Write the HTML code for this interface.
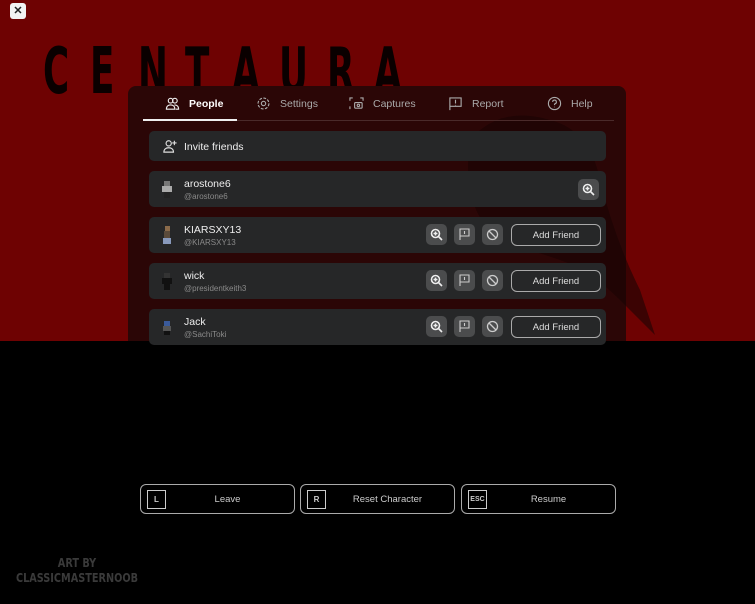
<!DOCTYPE html>
<html><head><meta charset="utf-8"><style>
*{margin:0;padding:0;box-sizing:border-box}
body{width:755px;height:604px;background:#000;position:relative;overflow:hidden;font-family:"Liberation Sans",sans-serif;color:#e8e8e8}
.red{position:absolute;left:0;top:0;width:755px;height:341px;background:#6e0202}
.close{position:absolute;left:10px;top:3px;width:16px;height:16px;background:#f2f2f2;border-radius:3px;color:#222;font-size:11px;line-height:16px;text-align:center;font-weight:bold}
.title{position:absolute;left:43px;top:42px;height:60px}
.title span{position:absolute;top:0;width:40px;font-size:64px;line-height:60px;color:#0a0000;font-weight:bold;font-family:"DejaVu Sans Condensed","Liberation Sans",sans-serif;transform:scaleX(.62);transform-origin:left}
.panel{position:absolute;left:128px;top:86px;width:498px;height:255px;background:#2b0606;border-radius:8px 8px 0 0}
.crow{position:absolute;left:440px;top:100px;width:220px;height:240px;opacity:.6}
.tab{position:absolute;top:96px;font-size:10.5px;color:#aaa;display:flex;align-items:center;gap:9px}
.tab svg{width:15px;height:15px}
.line{position:absolute;left:143px;top:120px;width:471px;height:1px;background:#4a2a2a}
.sel{position:absolute;left:143px;top:119px;width:94px;height:2px;background:#eee}
.row{position:absolute;left:149px;width:457px;height:36px;background:#262728;border-radius:5px}
.av{position:absolute;left:10px;top:8px;width:16px;height:20px}
.nm{position:absolute;left:35px;top:7px;font-size:10.5px;color:#eee}
.un{position:absolute;left:35px;top:21px;font-size:8px;color:#8a8a8a}
.ib{position:absolute;top:7px;width:21px;height:21px;background:#4b4c4d;border-radius:5px}
.ib svg{width:21px;height:21px}
.af{position:absolute;left:362px;top:7px;width:90px;height:22px;border:1px solid #aaa;border-radius:6px;font-size:9.5px;text-align:center;line-height:22px;color:#ddd}
.bb{position:absolute;top:484px;width:155px;height:30px;border:1px solid #aaa;border-radius:6px;font-size:9.5px;color:#ccc}
.bb .k{position:absolute;left:6px;top:5px;width:19px;height:19px;border:1px solid #ccc;font-size:8px;text-align:center;line-height:17px;font-weight:bold}
.bb .t{position:absolute;left:0;right:0;top:9px;text-align:center;padding-left:20px}
.art{position:absolute;left:2px;top:556px;width:150px;text-align:center;font-size:12px;font-weight:bold;color:#3a3a3a;line-height:15px;font-family:"DejaVu Sans Condensed",sans-serif}
.art div{transform:scaleX(.9);white-space:nowrap}
</style></head><body>
<div class="red"></div>
<div class="close">✕</div>
<div class="title"><span style="left:0">C</span><span style="left:47px">E</span><span style="left:95px">N</span><span style="left:142px">T</span><span style="left:189px">A</span><span style="left:236px">U</span><span style="left:284px">R</span><span style="left:331px">A</span></div>
<div class="panel"></div>
<svg class="crow" viewBox="0 0 220 240"><path d="M30 40 Q60 5 110 20 Q150 30 160 80 Q175 140 200 190 L215 235 L180 200 Q150 170 120 160 L60 140 Q20 110 30 40Z" fill="#1a0404"/></svg>
<div class="tab" style="left:165px;color:#fff;font-weight:bold"><svg viewBox="0 0 16 16" fill="none" stroke="#eee" stroke-width="1.2"><circle cx="6" cy="5" r="2.5"/><circle cx="10.5" cy="5" r="2.5"/><path d="M1.5 14c0-3 2-4.5 4.5-4.5S10.5 11 10.5 14zM10 9.5c2.5 0 4.5 1.5 4.5 4.5h-3"/></svg>People</div>
<div class="tab" style="left:256px"><svg viewBox="0 0 16 16" fill="none" stroke="#aaa" stroke-width="1.2"><circle cx="8" cy="8" r="2.3"/><circle cx="8" cy="8" r="5.8" stroke-dasharray="3 1.5"/></svg>Settings</div>
<div class="tab" style="left:349px"><svg viewBox="0 0 16 16" fill="none" stroke="#aaa" stroke-width="1.2"><path d="M1 5V2h3M1 11v3M12 2h3v3"/><rect x="6" y="7" width="8" height="6" rx="1"/><circle cx="10" cy="10" r="1.3"/></svg>Captures</div>
<div class="tab" style="left:448px"><svg viewBox="0 0 16 16" fill="none" stroke="#aaa" stroke-width="1.2"><path d="M2 15V2h12v9H2"/><path d="M8 4v4M8 9.5v.5"/></svg>Report</div>
<div class="tab" style="left:547px"><svg viewBox="0 0 16 16" fill="none" stroke="#aaa" stroke-width="1.2"><circle cx="8" cy="8" r="6.5"/><path d="M6 6.3a2 2 0 1 1 2.5 2c-.4.2-.5.5-.5 1v.4M8 11.5v.5"/></svg>Help</div>
<div class="line"></div><div class="sel"></div>

<div class="row" style="top:131px;height:30px"><svg style="position:absolute;left:14px;top:8px" width="14" height="14" viewBox="0 0 16 16" fill="none" stroke="#ddd" stroke-width="1.3"><circle cx="6.5" cy="5" r="3"/><path d="M1 15c0-3.5 2.5-5 5.5-5s5.5 1.5 5.5 5zM13 2v5M10.5 4.5h5"/></svg><div class="nm" style="top:10px">Invite friends</div></div>

<div class="row" style="top:171px"><svg class="av" viewBox="0 0 16 20"><rect x="5" y="2" width="6" height="5" fill="#777"/><rect x="3" y="7" width="10" height="6" fill="#aaa"/><rect x="5" y="13" width="6" height="6" fill="#222"/></svg><div class="nm">arostone6</div><div class="un">@arostone6</div>
<div class="ib" style="left:429px;top:8px"><svg viewBox="0 0 21 21" fill="none" stroke="#eee" stroke-width="1.6"><circle cx="9.5" cy="9.5" r="4"/><path d="M12.5 12.5l3.5 3.5M9.5 7.5v4M7.5 9.5h4"/></svg></div></div>

<div class="row" style="top:217px"><svg class="av" viewBox="0 0 16 20"><rect x="6" y="1" width="5" height="5" fill="#8a6a4a"/><rect x="5" y="6" width="6" height="7" fill="#5a4a3a"/><rect x="4" y="13" width="8" height="6" fill="#8899bb"/></svg><div class="nm">KIARSXY13</div><div class="un">@KIARSXY13</div>
<div class="ib" style="left:277px"><svg viewBox="0 0 21 21" fill="none" stroke="#eee" stroke-width="1.6"><circle cx="9.5" cy="9.5" r="4"/><path d="M12.5 12.5l3.5 3.5M9.5 7.5v4M7.5 9.5h4"/></svg></div>
<div class="ib" style="left:305px"><svg viewBox="0 0 21 21" fill="none" stroke="#ccc" stroke-width="1.1"><path d="M6 16V5h9v7H6M10.5 7v3"/></svg></div>
<div class="ib" style="left:333px"><svg viewBox="0 0 21 21" fill="none" stroke="#ccc" stroke-width="1.3"><circle cx="10.5" cy="10.5" r="5"/><path d="M7 7l7 7"/></svg></div>
<div class="af">Add Friend</div></div>

<div class="row" style="top:263px"><svg class="av" viewBox="0 0 16 20"><rect x="5" y="2" width="6" height="5" fill="#333"/><rect x="3" y="7" width="10" height="6" fill="#111"/><rect x="5" y="13" width="6" height="6" fill="#111"/></svg><div class="nm">wick</div><div class="un">@presidentkeith3</div>
<div class="ib" style="left:277px"><svg viewBox="0 0 21 21" fill="none" stroke="#eee" stroke-width="1.6"><circle cx="9.5" cy="9.5" r="4"/><path d="M12.5 12.5l3.5 3.5M9.5 7.5v4M7.5 9.5h4"/></svg></div>
<div class="ib" style="left:305px"><svg viewBox="0 0 21 21" fill="none" stroke="#ccc" stroke-width="1.1"><path d="M6 16V5h9v7H6M10.5 7v3"/></svg></div>
<div class="ib" style="left:333px"><svg viewBox="0 0 21 21" fill="none" stroke="#ccc" stroke-width="1.3"><circle cx="10.5" cy="10.5" r="5"/><path d="M7 7l7 7"/></svg></div>
<div class="af">Add Friend</div></div>

<div class="row" style="top:309px"><svg class="av" viewBox="0 0 16 20"><rect x="5" y="4" width="6" height="5" fill="#3a5a9a"/><rect x="4" y="9" width="8" height="5" fill="#555"/><rect x="5" y="14" width="6" height="4" fill="#111"/></svg><div class="nm">Jack</div><div class="un">@SachiToki</div>
<div class="ib" style="left:277px"><svg viewBox="0 0 21 21" fill="none" stroke="#eee" stroke-width="1.6"><circle cx="9.5" cy="9.5" r="4"/><path d="M12.5 12.5l3.5 3.5M9.5 7.5v4M7.5 9.5h4"/></svg></div>
<div class="ib" style="left:305px"><svg viewBox="0 0 21 21" fill="none" stroke="#ccc" stroke-width="1.1"><path d="M6 16V5h9v7H6M10.5 7v3"/></svg></div>
<div class="ib" style="left:333px"><svg viewBox="0 0 21 21" fill="none" stroke="#ccc" stroke-width="1.3"><circle cx="10.5" cy="10.5" r="5"/><path d="M7 7l7 7"/></svg></div>
<div class="af">Add Friend</div></div>

<div class="bb" style="left:140px"><div class="k">L</div><div class="t">Leave</div></div>
<div class="bb" style="left:300px"><div class="k">R</div><div class="t">Reset Character</div></div>
<div class="bb" style="left:461px"><div class="k" style="font-size:7px">ESC</div><div class="t">Resume</div></div>
<div class="art"><div>ART BY</div><div>CLASSICMASTERNOOB</div></div>
</body></html>
